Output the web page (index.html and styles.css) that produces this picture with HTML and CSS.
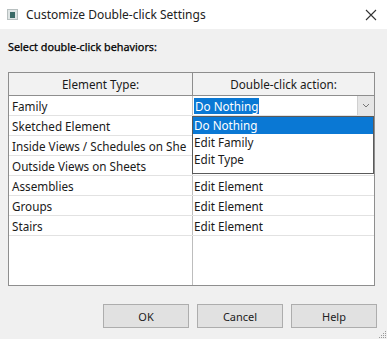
FILE: index.html
```html
<!DOCTYPE html>
<html>
<head>
<meta charset="utf-8">
<link rel="stylesheet" href="styles.css">
</head>
<body>
<div class="dialog">
  <div class="titlebar">
    <span class="appicon"><span class="appicon-inner"></span></span>
    <span class="title">Customize Double-click Settings</span>
    <svg class="close" width="12" height="12" viewBox="0 0 12 12"><path d="M1 1L11 11M11 1L1 11" stroke="#333" stroke-width="1.1" fill="none"/></svg>
  </div>
  <div class="content">
    <div class="label">Select double-click behaviors:</div>
    <div class="table">
      <div class="row head">
        <div class="cell left">Element Type:</div>
        <div class="cell right">Double-click action:</div>
      </div>
      <div class="row">
        <div class="cell left">Family</div>
        <div class="cell right combo">
          <span class="sel">Do Nothing</span>
          <span class="arrow"><svg width="8" height="5" viewBox="0 0 8 5"><path d="M1 1L4 4L7 1" stroke="#777" stroke-width="1" fill="none"/></svg></span>
        </div>
      </div>
      <div class="row"><div class="cell left">Sketched Element</div><div class="cell right"></div></div>
      <div class="row"><div class="cell left"><span class="clip">Inside Views / Schedules on She</span></div><div class="cell right"></div></div>
      <div class="row"><div class="cell left">Outside Views on Sheets</div><div class="cell right"></div></div>
      <div class="row"><div class="cell left">Assemblies</div><div class="cell right">Edit Element</div></div>
      <div class="row"><div class="cell left">Groups</div><div class="cell right">Edit Element</div></div>
      <div class="row"><div class="cell left">Stairs</div><div class="cell right">Edit Element</div></div>
      <div class="row filler"><div class="cell left"></div><div class="cell right"></div></div>
      <div class="dropdown">
        <div class="opt active">Do Nothing</div>
        <div class="opt">Edit Family</div>
        <div class="opt">Edit Type</div>
      </div>
    </div>
    <div class="buttons">
      <button class="btn">OK</button>
      <button class="btn">Cancel</button>
      <button class="btn">Help</button>
    </div>
  </div>
  <svg class="grip" width="10" height="10" viewBox="0 0 10 10">
    <rect x="8" y="2" width="1" height="1" fill="#999"/>
    <rect x="6" y="4" width="1" height="1" fill="#999"/>
    <rect x="8" y="4" width="1" height="1" fill="#999"/>
    <rect x="4" y="6" width="1" height="1" fill="#999"/>
    <rect x="6" y="6" width="1" height="1" fill="#999"/>
    <rect x="8" y="6" width="1" height="1" fill="#999"/>
    <rect x="2" y="8" width="1" height="1" fill="#999"/>
    <rect x="4" y="8" width="1" height="1" fill="#999"/>
    <rect x="6" y="8" width="1" height="1" fill="#999"/>
    <rect x="8" y="8" width="1" height="1" fill="#999"/>
  </svg>
</div>
</body>
</html>
```
FILE: styles.css
```css
* { box-sizing: border-box; }
html, body { margin: 0; padding: 0; }
body {
  width: 387px;
  height: 339px;
  overflow: hidden;
  font-family: "Noto Sans", "Open Sans", sans-serif;
  color: #1a1a1a;
  background: #f0f0f0;
}
.dialog {
  position: relative;
  width: 387px;
  height: 339px;
  background: #f0f0f0;
}
.titlebar {
  height: 29px;
  background: #ffffff;
  display: flex;
  align-items: center;
  padding-left: 7px;
}
.appicon {
  width: 11px;
  height: 11px;
  border: 1px solid #b8c0c0;
  background: #dfe5e5;
  display: flex;
  align-items: center;
  justify-content: flex-start;
  padding-left: 2px;
}
.appicon-inner {
  width: 5px;
  height: 6px;
  background: #3a6a66;
}
.title {
  margin-left: 8px;
  font-size: 12px;
  color: #222;
}
.close {
  margin-left: auto;
  margin-right: 10px;
}
.content {
  padding: 0 0 0 8px;
}
.label {
  font-size: 10.8px;
  height: 16px;
  margin-top: 10px;
  line-height: 16px;
  color: #000;
  -webkit-text-stroke: 0.25px #000;
}
.table {
  position: relative;
  margin-top: 17px;
  width: 367px;
  height: 214px;
  border: 1px solid #8e8e8e;
  background: #ffffff;
  display: flex;
  flex-direction: column;
}
.row {
  display: flex;
  height: 20px;
  border-bottom: 1px solid #e2e2e2;
  font-size: 11.7px;
  line-height: 18px;
}
.row.head {
  height: 23px;
  background: #f2f2f2;
  border-bottom: 1px solid #8e8e8e;
}
.row.filler {
  flex: 1;
  border-bottom: none;
}
.cell {
  display: flex;
  align-items: center;
  white-space: nowrap;
  overflow: hidden;
}
.cell.left {
  width: 184px;
  border-right: 1px solid #bdbdbd;
  padding-left: 3px;
}
.cell.right {
  flex: 1;
  padding-left: 1px;
}
.head .cell {
  justify-content: center;
  padding-left: 0;
}
.head .cell.left { border-right-color: #8e8e8e; }
.combo {
  position: relative;
}
.sel {
  background: #0a78d4;
  color: #ffffff;
  height: 16px;
  line-height: 16px;
  padding: 0 1px;
}
.arrow {
  margin-left: auto;
  width: 17px;
  height: 19px;
  background: #e6e6e6;
  border-left: 1px solid #d0d0d0;
  display: flex;
  align-items: center;
  justify-content: center;
}
.dropdown {
  position: absolute;
  left: 183px;
  top: 43px;
  width: 182px;
  height: 58px;
  background: #ffffff;
  border: 1px solid #5a5a5a;
  font-size: 11.7px;
}
.opt {
  height: 17px;
  line-height: 17px;
  padding-left: 1px;
}
.opt.active {
  background: #0a78d4;
  color: #ffffff;
}
.buttons {
  display: flex;
  justify-content: flex-end;
  gap: 8px;
  margin-top: 18px;
  width: 369px;
}
.btn {
  width: 86px;
  height: 24px;
  background: #e1e1e1;
  border: 1px solid #adadad;
  font-family: "Noto Sans", "Open Sans", sans-serif;
  font-size: 11px;
  color: #222;
  padding: 0;
}
.grip {
  position: absolute;
  right: 0;
  bottom: 0;
}
```
